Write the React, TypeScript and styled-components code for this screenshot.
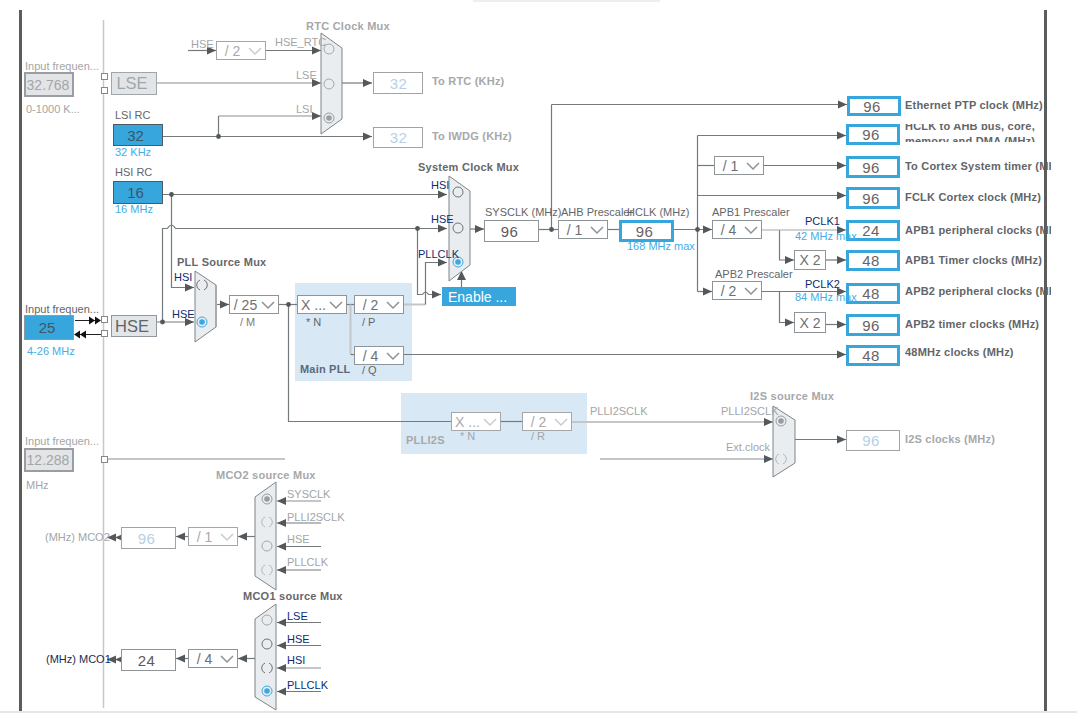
import React from "react";
import styled, { createGlobalStyle, css } from "styled-components";

const GlobalStyle = createGlobalStyle`
  html, body {
    margin: 0;
    padding: 0;
    background: #ffffff;
    font-family: "Liberation Sans", Arial, sans-serif;
  }
`;

const WIRE = "#74797c";
const FAINT = "#c4c6c7";
const ARROW = "#54585b";
const BLUE = "#36a6dc";

type Tone = "text" | "muted" | "navy" | "blue" | "brown" | "title" | "titleMuted" | "output" | "outputMuted" | "pll" | "black";

const toneStyles: Record<Tone, ReturnType<typeof css>> = {
  text: css`color: #62666a;`,
  muted: css`color: #a3a5a7;`,
  navy: css`color: #0c2c72;`,
  black: css`color: #1d2a52;`,
  blue: css`color: #46ade6;`,
  brown: css`color: #7f7a74;`,
  title: css`color: #66676a; font-weight: 700; letter-spacing: 0.25px;`,
  titleMuted: css`color: #a6a8aa; font-weight: 700; letter-spacing: 0.25px;`,
  output: css`color: #626569; font-weight: 700; letter-spacing: 0.2px;`,
  outputMuted: css`color: #a6a8aa; font-weight: 700; letter-spacing: 0.2px;`,
  pll: css`color: #5b6a7c; font-weight: 700; letter-spacing: 0.2px;`,
};

const Canvas = styled.div`
  position: relative;
  width: 1077px;
  height: 713px;
  overflow: hidden;
  background: #ffffff;
`;

const TopStrip = styled.div`
  position: absolute;
  left: 473px;
  top: 0;
  width: 187px;
  height: 2px;
  background: #eeeeee;
`;

const BottomLine = styled.div`
  position: absolute;
  left: 0;
  right: 0;
  top: 711px;
  height: 2px;
  background: #e6e6e6;
`;

const SideBar = styled.div<{ $x: number }>`
  position: absolute;
  left: ${({ $x }) => $x}px;
  top: 10px;
  bottom: 2px;
  width: 3px;
  background: #5c5c5c;
  z-index: 5;
`;

const Panel = styled.div<{ $x: number; $y: number; $w: number; $h: number }>`
  position: absolute;
  left: ${({ $x }) => $x}px;
  top: ${({ $y }) => $y}px;
  width: ${({ $w }) => $w}px;
  height: ${({ $h }) => $h}px;
  background: #d9e8f5;
`;

const Drawing = styled.svg`
  position: absolute;
  left: 0;
  top: 0;
  z-index: 1;
`;

const Label = styled.span<{ $x: number; $y: number; $tone: Tone }>`
  position: absolute;
  left: ${({ $x }) => $x}px;
  top: ${({ $y }) => $y - 7}px;
  font-size: 11px;
  line-height: 14px;
  white-space: nowrap;
  z-index: 3;
  ${({ $tone }) => toneStyles[$tone]}
`;

const OutputLabel = styled(Label)`
  width: 146px;
  overflow: hidden;
`;

const WrappedOutput = styled.div`
  position: absolute;
  left: 905px;
  top: 124px;
  width: 146px;
  height: 18px;
  overflow: hidden;
  z-index: 3;
  font-size: 11px;
  line-height: 15px;
  color: #626569;
  font-weight: 700;
  letter-spacing: 0.2px;
`;

const WrappedLine = styled.div`
  position: relative;
  top: -5px;
  white-space: nowrap;
`;

type BoxKind = "plain" | "multiplier" | "clock" | "dim" | "rtc" | "source" | "input" | "inputDim" | "osc" | "oscDim";

const kindStyles: Record<BoxKind, ReturnType<typeof css>> = {
  plain: css`
    border: 1.5px solid #8f9498;
    background: #ffffff;
    color: #5f5a5c;
    font-size: 15px;
    letter-spacing: 0.3px;
    padding-right: 4px;
  `,
  multiplier: css`
    border: 1.5px solid #8f9498;
    background: #ffffff;
    color: #6c7074;
    font-size: 14px;
  `,
  clock: css`
    border: 3px solid ${BLUE};
    background: #ffffff;
    color: #6a6265;
    font-size: 15px;
    letter-spacing: 0.3px;
    padding-right: 4px;
  `,
  dim: css`
    border: 1.5px solid #a0a4a7;
    background: #ffffff;
    color: #b7cfe6;
    font-size: 15px;
    letter-spacing: 0.3px;
    padding-right: 4px;
  `,
  rtc: css`
    border: 1.5px solid #a0a4a7;
    background: #ffffff;
    color: #b7cfe6;
    font-size: 15px;
    letter-spacing: 0.3px;
    padding-left: 1px;
  `,
  source: css`
    background: ${BLUE};
    border: 1.5px solid #4d5a63;
    color: #3c5567;
    font-size: 15px;
    padding-right: 5px;
  `,
  input: css`
    background: ${BLUE};
    border: 1px solid #8f9ba3;
    color: #44565f;
    font-size: 15px;
    padding-right: 4px;
  `,
  inputDim: css`
    background: #e2e4e6;
    border: 2px solid #9a9ea2;
    color: #a2a6aa;
    font-size: 14px;
    padding-right: 2px;
  `,
  osc: css`
    background: #e2e6e9;
    border: 1.5px solid #91979c;
    color: #5e6469;
    font-size: 16.5px;
    padding-right: 4px;
  `,
  oscDim: css`
    background: #e2e5e7;
    border: 1.5px solid #a0a5a9;
    color: #a2a5a8;
    font-size: 16.5px;
    padding-right: 4px;
  `,
};

const ValueBox = styled.div<{ $x: number; $y: number; $w: number; $h: number; $kind: BoxKind }>`
  position: absolute;
  left: ${({ $x }) => $x}px;
  top: ${({ $y }) => $y}px;
  width: ${({ $w }) => $w}px;
  height: ${({ $h }) => $h}px;
  box-sizing: border-box;
  display: flex;
  align-items: center;
  justify-content: center;
  z-index: 2;
  ${({ $kind }) => kindStyles[$kind]}
`;

const SelectBox = styled.div<{ $x: number; $y: number; $dim?: boolean }>`
  position: absolute;
  left: ${({ $x }) => $x}px;
  top: ${({ $y }) => $y}px;
  width: 50px;
  height: 19px;
  box-sizing: border-box;
  display: flex;
  align-items: center;
  padding: 0 2px 0 1px;
  background: #ffffff;
  border: 1.5px solid ${({ $dim }) => ($dim ? "#a3a7aa" : "#8f9498")};
  color: ${({ $dim }) => ($dim ? "#a8abad" : "#6c7074")};
  font-size: 14px;
  white-space: nowrap;
  z-index: 2;
`;

const SelectValue = styled.span`
  flex: 1;
  text-align: center;
`;

const Chevron = styled.svg`
  flex: none;
`;

const EnableButton = styled.button`
  position: absolute;
  left: 442px;
  top: 287px;
  width: 74px;
  height: 19px;
  padding: 0 0 0 6px;
  border: 0;
  background: ${BLUE};
  color: #ffffff;
  font-family: inherit;
  font-size: 14px;
  text-align: left;
  z-index: 2;
`;

const Port = styled.div<{ $y: number }>`
  position: absolute;
  left: 101px;
  top: ${({ $y }) => $y}px;
  width: 5px;
  height: 5px;
  background: #ffffff;
  border: 1px solid #83888c;
  z-index: 2;
`;

const Select = ({ x, y, value, dim }: { x: number; y: number; value: string; dim?: boolean }) => (
  <SelectBox $x={x} $y={y} $dim={dim}>
    <SelectValue>{value}</SelectValue>
    <Chevron width="16" height="10" viewBox="0 0 16 10">
      <path d="M2 2 L8 8 L14 2" fill="none" stroke={dim ? "#c9cbcd" : "#8d9194"} strokeWidth="1.5" />
    </Chevron>
  </SelectBox>
);

type Wire = [string, boolean?];

const wires: Wire[] = [
  ["M188 50.5H216"],
  ["M265 50.5H321"],
  ["M157 83H321", true],
  ["M218.5 116H321", true],
  ["M218.5 116V136.5"],
  ["M163 136.5H372"],
  ["M342 83H372"],
  ["M163 194.5H447"],
  ["M171.5 194.5V287.5H194"],
  ["M447 228.5H176C175 228.5 174 225 171.5 225C169 225 168 228.5 167 228.5H162.5V322"],
  ["M157 322H194"],
  ["M417.5 228.5V294.5H422C423 294.5 424 292 425.5 292C427 292 428 294.5 429 294.5H441"],
  ["M404 304.5H425.5", true],
  ["M425.5 304.5V262.5H447"],
  ["M461.5 287V272"],
  ["M470 229H484"],
  ["M539 229.5H558"],
  ["M551.5 104.5V229.5"],
  ["M551.5 104.5H847"],
  ["M608 229.5H619"],
  ["M674 229.5H712"],
  ["M697.5 135.5V291.5"],
  ["M697.5 135.5H846"],
  ["M697.5 165.5H714"],
  ["M763 165.5H846"],
  ["M697.5 195.5H846"],
  ["M697.5 291.5H712"],
  ["M779.5 230V260H794"],
  ["M826 260H846"],
  ["M761 291.5H846"],
  ["M779.5 291.5V322.5H794"],
  ["M826 324.5H846"],
  ["M216 304.5H229"],
  ["M278 304.5H297"],
  ["M288.5 304.5V421.5H451"],
  ["M347 304.5H354"],
  ["M350.5 304.5V354", true],
  ["M350.5 354.5H354"],
  ["M404 354.5H846"],
  ["M500 421.5H522"],
  ["M571 422H773", true],
  ["M600 459H773", true],
  ["M107 459H285", true],
  ["M795 439.5H846"],
  ["M321 501H277", true],
  ["M321 523H277"],
  ["M321 546.5H277"],
  ["M321 570H277"],
  ["M255 536.5H238"],
  ["M188 536.5H176"],
  ["M121 537.5H107"],
  ["M321 622.5H277"],
  ["M321 645.5H277"],
  ["M321 668H277", true],
  ["M321 691.5H277"],
  ["M255 658.5H238"],
  ["M188 658.5H176"],
  ["M121 659.5H107"],
];

const rightArrows: [number, number][] = [
  [216, 50.5], [321, 50.5], [321, 83], [321, 116], [372, 83], [372, 136.5],
  [447, 194.5], [447, 228.5], [447, 262.5], [441, 294.5], [484, 229], [194, 287.5], [194, 322],
  [229, 304.5], [847, 104.5], [846, 135.5], [846, 165.5], [846, 195.5], [846, 230],
  [846, 260], [846, 291.5], [846, 324.5], [846, 354.5], [794, 260], [794, 322.5], [712, 229.5],
  [712, 291.5], [773, 422], [773, 459], [846, 439.5],
];

const leftArrows: [number, number][] = [
  [277, 501], [277, 523], [277, 546.5], [277, 570], [238, 536.5], [176, 536.5], [107, 537.5], [115, 537.5],
  [277, 622.5], [277, 645.5], [277, 668], [277, 691.5], [238, 658.5], [176, 658.5], [107, 659.5], [115, 659.5],
];

const dots: [number, number][] = [
  [218.5, 136.5], [171.5, 194.5], [162.5, 322], [417.5, 228.5], [551.5, 229.5], [697.5, 229.5], [288.5, 304.5],
];

type RadioKind = "on" | "grey" | "open" | "openFaint" | "gap" | "faint";
type Mux = { points: string; radios: [number, number, RadioKind][] };

const muxes: Mux[] = [
  { points: "321,33 342,48 342,119 321,134", radios: [[329, 49, "openFaint"], [329, 84, "openFaint"], [329, 118, "grey"]] },
  { points: "449,176 470,191 470,265 449,281", radios: [[458, 192, "open"], [458, 228, "open"], [458, 262, "on"]] },
  { points: "195,271 216,285 216,327 195,342", radios: [[202, 285, "gap"], [202, 322, "on"]] },
  { points: "773,406 795,420 795,463 773,477", radios: [[781, 421, "grey"], [781, 459, "faint"]] },
  {
    points: "255,497 276,482 276,590 255,576",
    radios: [[267, 499, "grey"], [267, 522, "faint"], [267, 546, "openFaint"], [267, 570, "faint"]],
  },
  {
    points: "255,619 276,604 276,710 255,697",
    radios: [[267, 620, "openFaint"], [267, 644, "open"], [267, 668, "gap"], [267, 691, "on"]],
  },
];

const Radio = ({ x, y, kind }: { x: number; y: number; kind: RadioKind }) => {
  if (kind === "gap" || kind === "faint") {
    const stroke = kind === "gap" ? "#6f7377" : "#b4b8bb";
    return (
      <path
        d={`M${x - 2} ${y - 5}A5.4 5.4 0 0 0 ${x - 2} ${y + 5}M${x + 2} ${y - 5}A5.4 5.4 0 0 1 ${x + 2} ${y + 5}`}
        fill="none"
        stroke={stroke}
        strokeWidth="1"
      />
    );
  }
  const colors: Record<string, string> = { on: "#3ba8e4", grey: "#9a9da0", open: "#6f7377", openFaint: "#a4a8ab" };
  const color = colors[kind];
  return (
    <g>
      <circle cx={x} cy={y} r="5" fill="none" stroke={color} strokeWidth="1" />
      {(kind === "on" || kind === "grey") && <circle cx={x} cy={y} r="2.8" fill={color} />}
    </g>
  );
};

const Diagram = () => (
  <Drawing width="1077" height="713" viewBox="0 0 1077 713">
    <path d="M103.5 20V708" stroke="#c8c8c8" strokeWidth="1.5" fill="none" />
    {wires.map(([d, faint], i) => (
      <path key={i} d={d} fill="none" stroke={faint ? FAINT : WIRE} strokeWidth={faint ? 2 : 1.2} />
    ))}
    <path d="M761 230H846" fill="none" stroke="#a2a5a7" strokeWidth="1.2" />
    <path d="M75 320.5H96M80 334.5H101" stroke="#222" strokeWidth="1" />
    {rightArrows.map(([x, y], i) => (
      <polygon key={i} points={`${x - 9},${y - 4} ${x},${y} ${x - 9},${y + 4}`} fill={ARROW} />
    ))}
    {leftArrows.map(([x, y], i) => (
      <polygon key={i} points={`${x + 9},${y - 4} ${x},${y} ${x + 9},${y + 4}`} fill={ARROW} />
    ))}
    <polygon points="89,316.5 95,320.5 89,324.5" fill="#111" />
    <polygon points="95,316.5 101,320.5 95,324.5" fill="#111" />
    <polygon points="80,330.5 74,334.5 80,338.5" fill="#111" />
    <polygon points="86,330.5 80,334.5 86,338.5" fill="#111" />
    <polygon points="457,280 461.5,271 466,280" fill={ARROW} />
    {dots.map(([x, y], i) => (
      <circle key={i} cx={x} cy={y} r="2.4" fill="#53575a" />
    ))}
    {muxes.map((m, i) => (
      <g key={i}>
        <polygon points={m.points} fill="#eaedf0" stroke="#7f8488" strokeWidth="1" />
        {m.radios.map(([x, y, kind], j) => (
          <Radio key={j} x={x} y={y} kind={kind} />
        ))}
      </g>
    ))}
    <path d="M216 285V327" stroke="#a8acaf" strokeWidth="2" fill="none" />
  </Drawing>
);

const labels: [number, number, string, Tone][] = [
  [306, 26, "RTC Clock Mux", "titleMuted"],
  [25, 66, "Input frequen...", "muted"],
  [26, 109, "0-1000 K...", "muted"],
  [191, 44, "HSE", "muted"],
  [275, 42, "HSE_RTC", "muted"],
  [296, 75, "LSE", "muted"],
  [296, 109, "LSI", "muted"],
  [432, 81, "To RTC (KHz)", "outputMuted"],
  [432, 136, "To IWDG (KHz)", "outputMuted"],
  [115, 115, "LSI RC", "text"],
  [115, 152, "32 KHz", "blue"],
  [115, 172, "HSI RC", "text"],
  [115, 209, "16 MHz", "blue"],
  [418, 167, "System Clock Mux", "title"],
  [431, 185, "HSI", "navy"],
  [431, 219, "HSE", "navy"],
  [418, 254, "PLLCLK", "navy"],
  [485, 212, "SYSCLK (MHz)", "text"],
  [561, 212, "AHB Prescaler", "text"],
  [627, 212, "HCLK (MHz)", "text"],
  [627, 246, "168 MHz max", "blue"],
  [712, 212, "APB1 Prescaler", "text"],
  [805, 221, "PCLK1", "navy"],
  [795, 236, "42 MHz max", "blue"],
  [715, 274, "APB2 Prescaler", "text"],
  [805, 284, "PCLK2", "navy"],
  [795, 297, "84 MHz max", "blue"],
  [177, 262, "PLL Source Mux", "title"],
  [174, 277, "HSI", "navy"],
  [172, 314, "HSE", "navy"],
  [25, 309, "Input frequen...", "text"],
  [27, 351, "4-26 MHz", "blue"],
  [240, 322, "/ M", "brown"],
  [306, 322, "* N", "text"],
  [362, 322, "/ P", "text"],
  [362, 370, "/ Q", "text"],
  [300, 369, "Main PLL", "pll"],
  [25, 441, "Input frequen...", "muted"],
  [26, 485, "MHz", "muted"],
  [460, 436, "* N", "muted"],
  [531, 436, "/ R", "muted"],
  [406, 440, "PLLI2S", "titleMuted"],
  [590, 411, "PLLI2SCLK", "muted"],
  [721, 411, "PLLI2SCLK", "muted"],
  [726, 447, "Ext.clock", "muted"],
  [750, 396, "I2S source Mux", "titleMuted"],
  [905, 439, "I2S clocks (MHz)", "outputMuted"],
  [216, 475, "MCO2 source Mux", "titleMuted"],
  [287, 494, "SYSCLK", "muted"],
  [287, 517, "PLLI2SCLK", "muted"],
  [287, 539, "HSE", "muted"],
  [287, 562, "PLLCLK", "muted"],
  [45, 537, "(MHz) MCO2", "muted"],
  [243, 596, "MCO1 source Mux", "title"],
  [287, 616, "LSE", "navy"],
  [287, 639, "HSE", "navy"],
  [287, 660, "HSI", "navy"],
  [287, 685, "PLLCLK", "navy"],
  [46, 659, "(MHz) MCO1", "black"],
];

const outputLabels: [number, string][] = [
  [105, "Ethernet PTP clock (MHz)"],
  [166, "To Cortex System timer (MHz)"],
  [197, "FCLK Cortex clock (MHz)"],
  [230, "APB1 peripheral clocks (MHz)"],
  [260, "APB1 Timer clocks (MHz)"],
  [291, "APB2 peripheral clocks (MHz)"],
  [324, "APB2 timer clocks (MHz)"],
  [352, "48MHz clocks (MHz)"],
];

const boxes: [number, number, number, number, string, BoxKind][] = [
  [24, 72, 50, 25, "32.768", "inputDim"],
  [24, 315, 50, 25, "25", "input"],
  [24, 448, 50, 24, "12.288", "inputDim"],
  [111, 72, 46, 23, "LSE", "oscDim"],
  [111, 315, 46, 22, "HSE", "osc"],
  [113, 124, 50, 22, "32", "source"],
  [113, 181, 50, 23, "16", "source"],
  [373, 72, 50, 22, "32", "rtc"],
  [373, 127, 50, 21, "32", "rtc"],
  [484, 220, 55, 22, "96", "plain"],
  [619, 220, 55, 22, "96", "clock"],
  [847, 96, 54, 20, "96", "clock"],
  [846, 124, 54, 21, "96", "clock"],
  [846, 156, 54, 22, "96", "clock"],
  [846, 187, 54, 22, "96", "clock"],
  [846, 220, 54, 21, "24", "clock"],
  [846, 250, 54, 21, "48", "clock"],
  [846, 283, 54, 21, "48", "clock"],
  [846, 314, 54, 22, "96", "clock"],
  [846, 345, 54, 21, "48", "clock"],
  [846, 430, 54, 21, "96", "dim"],
  [794, 250, 32, 20, "X 2", "multiplier"],
  [794, 312, 32, 21, "X 2", "multiplier"],
  [121, 527, 55, 22, "96", "dim"],
  [121, 649, 55, 22, "24", "plain"],
];

const selects: [number, number, string, boolean?][] = [
  [216, 41, "/ 2", true],
  [229, 295, "/ 25"],
  [297, 295, "X ..."],
  [354, 295, "/ 2"],
  [354, 346, "/ 4"],
  [558, 220, "/ 1"],
  [714, 156, "/ 1"],
  [712, 220, "/ 4"],
  [712, 281, "/ 2"],
  [451, 412, "X ...", true],
  [522, 412, "/ 2", true],
  [188, 527, "/ 1", true],
  [188, 649, "/ 4"],
];

export default function App() {
  return (
    <Canvas>
      <GlobalStyle />
      <TopStrip />
      <BottomLine />
      <SideBar $x={19} />
      <SideBar $x={1044} />
      <Panel $x={295} $y={283} $w={117} $h={98} />
      <Panel $x={401} $y={393} $w={186} $h={61} />
      <Diagram />
      <Port $y={73} />
      <Port $y={87} />
      <Port $y={316} />
      <Port $y={330} />
      <Port $y={456} />
      {boxes.map(([x, y, w, h, value, kind], i) => (
        <ValueBox key={i} $x={x} $y={y} $w={w} $h={h} $kind={kind}>
          {value}
        </ValueBox>
      ))}
      {selects.map(([x, y, value, dim], i) => (
        <Select key={i} x={x} y={y} value={value} dim={dim} />
      ))}
      <EnableButton>Enable ...</EnableButton>
      {labels.map(([x, y, text, tone], i) => (
        <Label key={i} $x={x} $y={y} $tone={tone}>
          {text}
        </Label>
      ))}
      {outputLabels.map(([y, text]) => (
        <OutputLabel key={y} $x={905} $y={y} $tone="output">
          {text}
        </OutputLabel>
      ))}
      <WrappedOutput>
        <WrappedLine>HCLK to AHB bus, core,</WrappedLine>
        <WrappedLine>memory and DMA (MHz)</WrappedLine>
      </WrappedOutput>
    </Canvas>
  );
}
